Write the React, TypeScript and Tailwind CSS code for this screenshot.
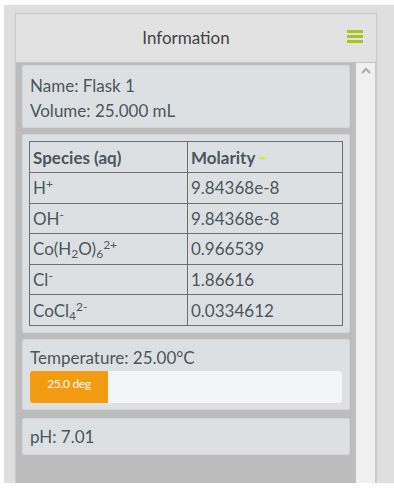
import React from "react";

type Row = { species: React.ReactNode; molarity: string };

const ROWS: Row[] = [
  { species: <>H<sup className="text-[12px]">+</sup></>, molarity: "9.84368e-8" },
  { species: <>OH<sup className="text-[12px]">-</sup></>, molarity: "9.84368e-8" },
  {
    species: (
      <>
        Co(H<sub className="text-[12px]">2</sub>O)<sub className="text-[12px]">6</sub>
        <sup className="text-[12px]">2+</sup>
      </>
    ),
    molarity: "0.966539",
  },
  { species: <>Cl<sup className="text-[12px]">-</sup></>, molarity: "1.86616" },
  {
    species: (
      <>
        CoCl<sub className="text-[12px]">4</sub>
        <sup className="text-[12px]">2-</sup>
      </>
    ),
    molarity: "0.0334612",
  },
];

const temp = 25.0;

export default function App() {
  return (
    <div
      className="h-[488px] w-[394px] bg-white pb-[5px] pl-[4px] pt-[5px] text-[#4b5660]"
      style={{ fontFamily: "Lato, 'Open Sans', sans-serif" }}
    >
      <div className="h-full bg-[#dedede] pl-[11px] pt-[8px]">
        <div className="flex h-full w-[362px] flex-col border-x border-t border-[#c9c9c9]">
          {/* header */}
          <div className="relative flex h-[49px] shrink-0 items-center border-b border-[#c4c4c4] bg-[#e2e2e2]">
            <span className="w-[340px] text-center text-[17px] text-[#444]">Information</span>
            <div className="absolute right-[13px] top-[16px] flex flex-col gap-[2px]">
              <span className="h-[3px] w-[16px] bg-[#a7c51b]" />
              <span className="h-[3px] w-[16px] bg-[#a7c51b]" />
              <span className="h-[3px] w-[16px] bg-[#a7c51b]" />
            </div>
          </div>

          <div className="flex min-h-0 flex-1">
            {/* content */}
            <div className="flex w-[340px] flex-col gap-[6px] bg-[#bcbcbc] px-[6px] pt-[2px] text-[17px]">
              <div className="rounded-[2px] border border-[#d3d6d8] bg-[#dde0e2] px-[7px] pt-[7px] pb-[4px] leading-[25px]">
                <div>Name: Flask 1</div>
                <div>Volume: 25.000 mL</div>
              </div>

              <div className="rounded-[2px] border border-[#d3d6d8] bg-[#dde0e2] p-[6px]">
                <table className="w-full border-collapse">
                  <thead>
                    <tr className="h-[31px]">
                      <th className="w-[158px] border border-[#6f6f6f] px-[3px] text-left font-bold leading-none">
                        Species (aq)
                      </th>
                      <th className="border border-[#6f6f6f] px-[3px] text-left font-bold leading-none">
                        Molarity
                        <span className="ml-[3px] inline-block border-x-[4px] border-t-[4px] border-x-transparent border-t-[#d4e84a] align-middle" />
                      </th>
                    </tr>
                  </thead>
                  <tbody>
                    {ROWS.map((r, i) => (
                      <tr key={i} className="h-[30.6px]">
                        <td className="border border-[#6f6f6f] px-[3px] leading-none">{r.species}</td>
                        <td className="border border-[#6f6f6f] px-[3px] leading-none">{r.molarity}</td>
                      </tr>
                    ))}
                  </tbody>
                </table>
              </div>

              <div className="rounded-[2px] border border-[#d3d6d8] bg-[#dde0e2] px-[7px] pt-[7px] pb-[6px]">
                <div className="leading-[22px]">Temperature: 25.00°C</div>
                <div className="mt-[2px] flex h-[32px] overflow-hidden rounded-[3px] bg-[#f4f5f6]">
                  <div
                    className="flex items-center justify-center bg-[#f39c12] pb-[6px] text-[12px] tracking-tight text-white"
                    style={{ width: `${temp}%` }}
                  >
                    25.0 deg
                  </div>
                </div>
              </div>

              <div className="mt-[2px] rounded-[2px] border border-[#d3d6d8] bg-[#dde0e2] px-[7px] pt-[7px] pb-[6px] leading-[22px]">
                pH: 7.01
              </div>
            </div>

            {/* scrollbar */}
            <div className="w-[20px] border-r border-[#c9c9c9] bg-[#f0f0f0]">
              <svg width="20" height="16" viewBox="0 0 20 16" className="mt-[1px]">
                <path d="M6 9 L10 5 L14 9" fill="none" stroke="#a9a9a9" strokeWidth="2" />
              </svg>
            </div>
          </div>
        </div>
      </div>
    </div>
  );
}
